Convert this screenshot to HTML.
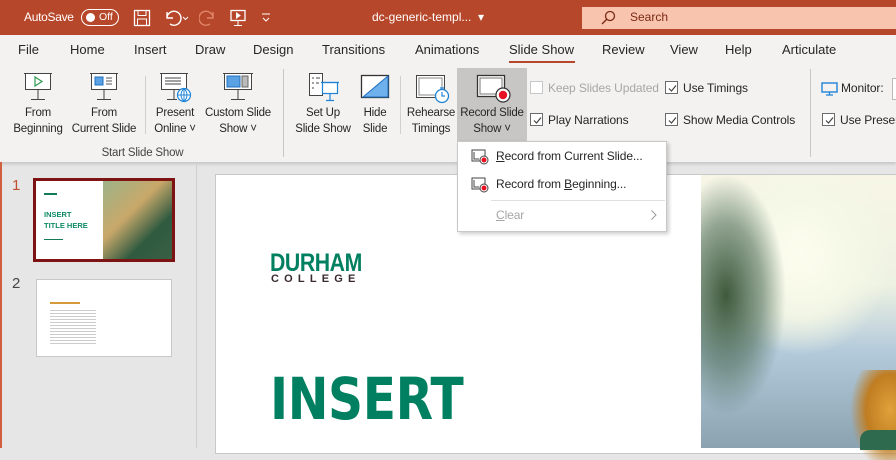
<!DOCTYPE html>
<html><head><meta charset="utf-8"><style>
*{margin:0;padding:0;box-sizing:border-box}
body{width:896px;height:448px;overflow:hidden;position:relative;font-family:"Liberation Sans",sans-serif;font-size:12px;color:#262626;background:#e6e6e6}
.a{position:absolute;white-space:nowrap}
.t{color:#fff;font-size:12px}
.tab{top:42px;font-size:13px;color:#262626}
.lbl{font-size:11.5px;text-align:center;line-height:16px;color:#262626;letter-spacing:-0.2px}
.ck{font-size:12px;letter-spacing:-0.1px}
.cb{width:13px;height:13px;border:1px solid #6b6b6b;background:#fff}
.cb svg{position:absolute;left:1px;top:1px}
</style></head><body>
<!-- title bar -->
<div class="a" style="left:0;top:0;width:896px;height:35px;background:#b7472a"></div>
<div class="a t" style="left:24px;top:10px;letter-spacing:-0.3px">AutoSave</div>
<div class="a" style="left:81px;top:9px;width:38px;height:17px;border:1.3px solid #fff;border-radius:9px"></div>
<div class="a" style="left:86px;top:13px;width:9px;height:9px;background:#fff;border-radius:50%"></div>
<div class="a t" style="left:99px;top:11px;font-size:10.5px">Off</div>
<svg class="a" style="left:133px;top:9px" width="18" height="18"><rect x="1.5" y="1.5" width="15" height="15" fill="none" stroke="#fff" stroke-width="1.3"/><rect x="5" y="1.5" width="8" height="5" fill="none" stroke="#fff"/><rect x="4.5" y="10" width="9" height="6.5" fill="none" stroke="#fff"/></svg>
<svg class="a" style="left:163px;top:9px" width="26" height="18"><path d="M4 3v6h6M4 9a7 7 0 1 1 3 6" fill="none" stroke="#fff" stroke-width="1.4"/><path d="M20 8l2.5 2.5L25 8" fill="none" stroke="#fff"/></svg>
<svg class="a" style="left:199px;top:9px" width="18" height="18"><path d="M14 3v6H8M14 9a7 7 0 1 0-3 6" fill="none" stroke="#e0846a" stroke-width="1.4"/></svg>
<svg class="a" style="left:229px;top:9px" width="18" height="18"><rect x="2" y="1.5" width="14" height="10" fill="none" stroke="#fff" stroke-width="1.3"/><path d="M9 11.5v5M5 16.5h8M7.5 4v5l3.5-2.5z" stroke="#fff" fill="#fff"/></svg>
<svg class="a" style="left:261px;top:13px" width="10" height="10"><path d="M1 1h8M2 5l3 3 3-3" fill="none" stroke="#fff"/></svg>
<div class="a t" style="left:372px;top:10px">dc-generic-templ... &nbsp;▾</div>
<div class="a" style="left:582px;top:7px;width:314px;height:22px;background:#f8c4ae"></div>
<svg class="a" style="left:600px;top:10px" width="16" height="16"><circle cx="10" cy="6" r="4.5" fill="none" stroke="#7a2a14" stroke-width="1.3"/><path d="M7 9l-5 5" stroke="#7a2a14" stroke-width="1.4"/></svg>
<div class="a" style="left:630px;top:10px;font-size:12px;color:#7a2a14">Search</div>
<!-- tabs + ribbon -->
<div class="a" style="left:0;top:35px;width:896px;height:127px;background:#f3f2f1;box-shadow:0 2px 3px rgba(0,0,0,.15)"></div>
<div class="a tab" style="left:18px">File</div>
<div class="a tab" style="left:70px">Home</div>
<div class="a tab" style="left:134px">Insert</div>
<div class="a tab" style="left:195px">Draw</div>
<div class="a tab" style="left:253px">Design</div>
<div class="a tab" style="left:322px">Transitions</div>
<div class="a tab" style="left:415px">Animations</div>
<div class="a tab" style="left:509px">Slide Show</div>
<div class="a" style="left:509px;top:61px;width:66px;height:2px;background:#b7472a"></div>
<div class="a tab" style="left:602px">Review</div>
<div class="a tab" style="left:670px">View</div>
<div class="a tab" style="left:725px">Help</div>
<div class="a tab" style="left:782px">Articulate</div>
<!-- group 1 icons -->
<svg class="a" style="left:23px;top:72px" width="30" height="30"><rect x="2.5" y="1.5" width="25" height="16" fill="#fff" stroke="#444"/><path d="M1 1.5h28M15 17.5v10M8 27.5h14" stroke="#444"/><path d="M12 5v9l7-4.5z" fill="#fff" stroke="#2e9b4e" stroke-width="1.2"/></svg>
<svg class="a" style="left:89px;top:72px" width="30" height="30"><rect x="2.5" y="1.5" width="25" height="16" fill="#fff" stroke="#444"/><path d="M1 1.5h28M15 17.5v10M8 27.5h14" stroke="#444"/><rect x="6" y="5" width="8" height="8" fill="#5aa1e3" stroke="#1f6fbf"/><path d="M17 6h6M17 9h6M17 12h6" stroke="#555"/></svg>
<svg class="a" style="left:159px;top:72px" width="34" height="32"><rect x="2.5" y="1.5" width="25" height="16" fill="#fff" stroke="#444"/><path d="M1 1.5h28M6 6h16M6 9h16M6 12h16M15 17.5v10M8 27.5h10" stroke="#444"/><circle cx="25" cy="23" r="6.5" fill="#fff" stroke="#1f84d8" stroke-width="1.2"/><path d="M18.5 23h13M25 16.5v13M25 16.5c-4 4-4 9 0 13M25 16.5c4 4 4 9 0 13" fill="none" stroke="#1f84d8"/></svg>
<svg class="a" style="left:222px;top:72px" width="32" height="30"><path d="M1 1.5h30M16 17.5v10M9 27.5h14" stroke="#444"/><rect x="2.5" y="1.5" width="27" height="16" fill="#fff" stroke="#444"/><rect x="5" y="4" width="13" height="11" fill="#5aa1e3" stroke="#1f6fbf"/><rect x="20" y="4" width="6" height="11" fill="#bbb" stroke="#666"/></svg>
<div class="a lbl" style="left:12px;top:105px;width:52px">From<br>Beginning</div>
<div class="a lbl" style="left:68px;top:105px;width:72px">From<br>Current Slide</div>
<div class="a" style="left:145px;top:76px;width:1px;height:58px;background:#d0d0d0"></div>
<div class="a lbl" style="left:148px;top:105px;width:54px">Present<br>Online ˅</div>
<div class="a lbl" style="left:201px;top:105px;width:74px">Custom Slide<br>Show ˅</div>
<div class="a lbl" style="left:90px;top:145px;width:105px;color:#444">Start Slide Show</div>
<div class="a" style="left:283px;top:69px;width:1px;height:88px;background:#c8c8c8"></div>
<!-- group 2 -->
<svg class="a" style="left:308px;top:72px" width="32" height="34"><rect x="1.5" y="1.5" width="13" height="22" fill="#fff" stroke="#444"/><path d="M4 6h2M4 11h2M4 16h2M8 6h4M8 11h3" stroke="#444"/><rect x="14.5" y="10.5" width="15" height="11" fill="#fff" stroke="#1f84d8" stroke-width="1.2"/><path d="M13 10.5h18M22 21.5v7M18 28.5h8" stroke="#1f84d8" stroke-width="1.2"/></svg>
<svg class="a" style="left:360px;top:74px" width="30" height="26"><rect x="1.5" y="1.5" width="27" height="22" fill="#fff" stroke="#333" stroke-width="1.3"/><path d="M28 2v21H3z" fill="#6fb1ec" stroke="#1f6fbf"/></svg>
<div class="a lbl" style="left:292px;top:105px;width:62px">Set Up<br>Slide Show</div>
<div class="a lbl" style="left:358px;top:105px;width:34px">Hide<br>Slide</div>
<div class="a" style="left:400px;top:76px;width:1px;height:58px;background:#d0d0d0"></div>
<svg class="a" style="left:415px;top:74px" width="36" height="32"><rect x="1.5" y="1.5" width="28" height="22" fill="#fff" stroke="#444"/><rect x="4" y="4" width="23" height="17" fill="none" stroke="#888"/><circle cx="27" cy="22" r="6.5" fill="#fff" stroke="#1f84d8" stroke-width="1.3"/><path d="M27 18v4h3M25 14h4" stroke="#1f84d8" stroke-width="1.2" fill="none"/></svg>
<div class="a lbl" style="left:404px;top:105px;width:54px">Rehearse<br>Timings</div>
<div class="a" style="left:457px;top:68px;width:70px;height:73px;background:#c8c6c4"></div>
<svg class="a" style="left:476px;top:74px" width="36" height="30"><rect x="1.5" y="1.5" width="27" height="21" fill="#fff" stroke="#333" stroke-width="1.3"/><rect x="4" y="4" width="22" height="16" fill="none" stroke="#777"/><circle cx="27" cy="21" r="7" fill="#fff" stroke="#333" stroke-width="1.2"/><circle cx="27" cy="21" r="4.2" fill="#e81123"/></svg>
<div class="a lbl" style="left:457px;top:105px;width:70px">Record Slide<br>Show ˅</div>
<!-- checkboxes -->
<div class="a cb" style="left:530px;top:81px;border-color:#c8c8c8"></div>
<div class="a ck" style="left:548px;top:81px;color:#a6a6a6">Keep Slides Updated</div>
<div class="a cb" style="left:530px;top:113px"><svg width="11" height="11"><path d="M2 5.5l2.5 2.5L9 2.5" fill="none" stroke="#444" stroke-width="1.2"/></svg></div>
<div class="a ck" style="left:548px;top:113px">Play Narrations</div>
<div class="a cb" style="left:665px;top:81px"><svg width="11" height="11"><path d="M2 5.5l2.5 2.5L9 2.5" fill="none" stroke="#444" stroke-width="1.2"/></svg></div>
<div class="a ck" style="left:683px;top:81px">Use Timings</div>
<div class="a cb" style="left:665px;top:113px"><svg width="11" height="11"><path d="M2 5.5l2.5 2.5L9 2.5" fill="none" stroke="#444" stroke-width="1.2"/></svg></div>
<div class="a ck" style="left:683px;top:113px">Show Media Controls</div>
<div class="a" style="left:810px;top:69px;width:1px;height:88px;background:#c8c8c8"></div>
<svg class="a" style="left:821px;top:82px" width="17" height="14"><rect x="1" y="1" width="15" height="9" fill="none" stroke="#1f84d8" stroke-width="1.4"/><path d="M8.5 10v3M5 13h7" stroke="#1f84d8" stroke-width="1.3"/></svg>
<div class="a ck" style="left:841px;top:81px">Monitor:</div>
<div class="a" style="left:892px;top:78px;width:10px;height:22px;border:1px solid #bbb;background:#fff"></div>
<div class="a cb" style="left:822px;top:113px"><svg width="11" height="11"><path d="M2 5.5l2.5 2.5L9 2.5" fill="none" stroke="#444" stroke-width="1.2"/></svg></div>
<div class="a ck" style="left:840px;top:113px">Use Presen</div>
<!-- left panel -->
<div class="a" style="left:0;top:162px;width:2px;height:286px;background:#d0603f"></div>
<div class="a" style="left:196px;top:162px;width:1px;height:286px;background:#d0d0d0"></div>
<div class="a" style="left:12px;top:177px;font-size:15px;color:#c0502f">1</div>
<div class="a" style="left:12px;top:275px;font-size:15px;color:#444">2</div>
<div class="a" style="left:33px;top:178px;width:142px;height:84px;border:3px solid #7d1313;background:#fff"></div>
<div class="a" style="left:103px;top:181px;width:69px;height:78px;background:linear-gradient(135deg,#9cb388,#c9a86a 40%,#2f5a40 70%,#3a6045)"></div>
<div class="a" style="left:44px;top:193px;width:13px;height:2px;background:#137a5a"></div>
<div class="a" style="left:44px;top:209px;font-size:7.5px;font-weight:bold;color:#108a66;line-height:11px">INSERT<br>TITLE HERE</div>
<div class="a" style="left:44px;top:239px;width:19px;height:1px;background:#137a5a"></div>
<div class="a" style="left:36px;top:279px;width:136px;height:78px;border:1px solid #c8c8c8;background:#fff"></div>
<div class="a" style="left:50px;top:302px;width:30px;height:2px;background:#d59a3b"></div>
<div class="a" style="left:50px;top:308px;width:46px;height:36px;background:repeating-linear-gradient(#fff 0 2px,#ccc 2px 3px)"></div>
<!-- slide -->
<div class="a" style="left:215px;top:174px;width:700px;height:280px;background:#fff;border:1px solid #c8c8c8"></div>
<div class="a" style="left:270px;top:249px;font-size:25px;font-weight:bold;color:#008060;letter-spacing:-0.5px;transform:scaleX(.85);transform-origin:left">DURHAM</div>
<div class="a" style="left:271px;top:273px;font-size:11px;font-weight:bold;color:#3a2a2e;letter-spacing:5.2px">COLLEGE</div>
<div class="a" style="left:270px;top:365px;font-size:58px;font-weight:bold;color:#008060;letter-spacing:-0.5px;font-family:'DejaVu Sans','Liberation Sans',sans-serif;transform:scaleX(.84);transform-origin:left">INSERT</div>
<div class="a" style="left:701px;top:175px;width:195px;height:273px;background:radial-gradient(ellipse 60px 120px at 25px 120px,#3e5a3c 0,rgba(80,110,90,.6) 60%,rgba(0,0,0,0) 100%),radial-gradient(ellipse 90px 100px at 100px 80px,#fdfdee 0,rgba(245,248,230,.9) 60%,rgba(0,0,0,0) 100%),linear-gradient(#f7f6e6 0,#eef2e2 40%,#b3cadb 65%,#8ba2b0 100%)"></div>
<div class="a" style="left:850px;top:370px;width:60px;height:90px;background:radial-gradient(ellipse 40px 60px at 40px 40px,#e0a23a,#c07d22 60%,rgba(0,0,0,0) 100%)"></div>
<div class="a" style="left:860px;top:430px;width:40px;height:20px;background:#2e6a4e;border-radius:10px 0 0 0"></div>
<!-- dropdown -->
<div class="a" style="left:457px;top:141px;width:210px;height:91px;background:#fff;border:1px solid #c8c8c8;box-shadow:2px 2px 4px rgba(0,0,0,.2)"></div>
<svg class="a" style="left:471px;top:149px" width="18" height="16"><rect x="1" y="1" width="13" height="11" fill="#fff" stroke="#444"/><path d="M3 3v7h5" fill="none" stroke="#444"/><circle cx="13" cy="11" r="4" fill="#fff" stroke="#444"/><circle cx="13" cy="11" r="2.5" fill="#e81123"/></svg>
<div class="a ck" style="left:496px;top:149px"><u>R</u>ecord from Current Slide...</div>
<svg class="a" style="left:471px;top:177px" width="18" height="16"><rect x="1" y="1" width="13" height="11" fill="#fff" stroke="#444"/><path d="M3 3v7h5" fill="none" stroke="#444"/><circle cx="13" cy="11" r="4" fill="#fff" stroke="#444"/><circle cx="13" cy="11" r="2.5" fill="#e81123"/></svg>
<div class="a ck" style="left:496px;top:177px">Record from <u>B</u>eginning...</div>
<div class="a" style="left:491px;top:200px;width:174px;height:1px;background:#e0e0e0"></div>
<div class="a ck" style="left:496px;top:208px;color:#a6a6a6"><u>C</u>lear</div>
<svg class="a" style="left:650px;top:209px" width="8" height="12"><path d="M1.5 1.5l4.5 4.5-4.5 4.5" fill="none" stroke="#999"/></svg>
</body></html>
